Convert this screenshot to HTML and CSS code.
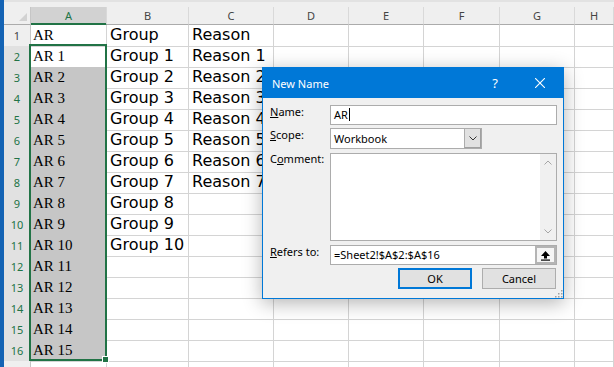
FILE: index.html
```html
<!DOCTYPE html>
<html>
<head>
<meta charset="utf-8">
<title>New Name</title>
<link rel="stylesheet" href="styles.css">
</head>
<body>

<div class="window">
	<div class="edge"></div>
	<div class="sheet">
		<div class="topbar"></div>
		<div class="row head">
			<div class="corner"></div>
			<div class="ch sel">A</div><div class="ch">B</div><div class="ch">C</div><div class="ch">D</div>
			<div class="ch">E</div><div class="ch">F</div><div class="ch">G</div><div class="ch">H</div>
		</div>
		<div class="row">
			<div class="rh">1</div><div class="c serif">AR</div><div class="c">Group</div><div class="c">Reason</div>
			<div class="c"></div><div class="c"></div><div class="c"></div><div class="c"></div><div class="c"></div>
		</div>
		<div class="row on">
			<div class="rh">2</div><div class="c serif">AR 1</div><div class="c">Group 1</div><div class="c">Reason 1</div>
			<div class="c"></div><div class="c"></div><div class="c"></div><div class="c"></div><div class="c"></div>
		</div>
		<div class="row on">
			<div class="rh">3</div><div class="c serif hl">AR 2</div><div class="c">Group 2</div><div class="c">Reason 2</div>
			<div class="c"></div><div class="c"></div><div class="c"></div><div class="c"></div><div class="c"></div>
		</div>
		<div class="row on">
			<div class="rh">4</div><div class="c serif hl">AR 3</div><div class="c">Group 3</div><div class="c">Reason 3</div>
			<div class="c"></div><div class="c"></div><div class="c"></div><div class="c"></div><div class="c"></div>
		</div>
		<div class="row on">
			<div class="rh">5</div><div class="c serif hl">AR 4</div><div class="c">Group 4</div><div class="c">Reason 4</div>
			<div class="c"></div><div class="c"></div><div class="c"></div><div class="c"></div><div class="c"></div>
		</div>
		<div class="row on">
			<div class="rh">6</div><div class="c serif hl">AR 5</div><div class="c">Group 5</div><div class="c">Reason 5</div>
			<div class="c"></div><div class="c"></div><div class="c"></div><div class="c"></div><div class="c"></div>
		</div>
		<div class="row on">
			<div class="rh">7</div><div class="c serif hl">AR 6</div><div class="c">Group 6</div><div class="c">Reason 6</div>
			<div class="c"></div><div class="c"></div><div class="c"></div><div class="c"></div><div class="c"></div>
		</div>
		<div class="row on">
			<div class="rh">8</div><div class="c serif hl">AR 7</div><div class="c">Group 7</div><div class="c">Reason 7</div>
			<div class="c"></div><div class="c"></div><div class="c"></div><div class="c"></div><div class="c"></div>
		</div>
		<div class="row on">
			<div class="rh">9</div><div class="c serif hl">AR 8</div><div class="c">Group 8</div><div class="c"></div>
			<div class="c"></div><div class="c"></div><div class="c"></div><div class="c"></div><div class="c"></div>
		</div>
		<div class="row on">
			<div class="rh">10</div><div class="c serif hl">AR 9</div><div class="c">Group 9</div><div class="c"></div>
			<div class="c"></div><div class="c"></div><div class="c"></div><div class="c"></div><div class="c"></div>
		</div>
		<div class="row on">
			<div class="rh">11</div><div class="c serif hl">AR 10</div><div class="c">Group 10</div><div class="c"></div>
			<div class="c"></div><div class="c"></div><div class="c"></div><div class="c"></div><div class="c"></div>
		</div>
		<div class="row on">
			<div class="rh">12</div><div class="c serif hl">AR 11</div><div class="c"></div><div class="c"></div>
			<div class="c"></div><div class="c"></div><div class="c"></div><div class="c"></div><div class="c"></div>
		</div>
		<div class="row on">
			<div class="rh">13</div><div class="c serif hl">AR 12</div><div class="c"></div><div class="c"></div>
			<div class="c"></div><div class="c"></div><div class="c"></div><div class="c"></div><div class="c"></div>
		</div>
		<div class="row on">
			<div class="rh">14</div><div class="c serif hl">AR 13</div><div class="c"></div><div class="c"></div>
			<div class="c"></div><div class="c"></div><div class="c"></div><div class="c"></div><div class="c"></div>
		</div>
		<div class="row on">
			<div class="rh">15</div><div class="c serif hl">AR 14</div><div class="c"></div><div class="c"></div>
			<div class="c"></div><div class="c"></div><div class="c"></div><div class="c"></div><div class="c"></div>
		</div>
		<div class="row on">
			<div class="rh">16</div><div class="c serif hl">AR 15</div><div class="c"></div><div class="c"></div>
			<div class="c"></div><div class="c"></div><div class="c"></div><div class="c"></div><div class="c"></div>
		</div>
		<div class="row">
			<div class="rh"></div><div class="c"></div><div class="c"></div><div class="c"></div>
			<div class="c"></div><div class="c"></div><div class="c"></div><div class="c"></div><div class="c"></div>
		</div>
	</div>
</div>

<!-- selection A2:A16 -->
<div class="selection"></div>
<div class="fill-handle"></div>

<div class="dlg">
	<div class="dlg-title">
		<span class="dlg-name">New Name</span>
		<span class="tbtn">?</span>
		<span class="tbtn close">
			<svg width="10" height="10" viewBox="0 0 10 10"><path d="M0 0L10 10M10 0L0 10" stroke="#fff" stroke-width="1.1" fill="none"/></svg>
		</span>
	</div>
	<div class="dlg-body">
		<div class="lbl"><u>N</u>ame:</div>
		<div class="field">AR<span class="caret"></span></div>

		<div class="lbl"><u>S</u>cope:</div>
		<div class="select">
			<span class="select-text">Workbook</span>
			<span class="dd">
				<svg width="8" height="5" viewBox="0 0 8 5"><path d="M0.5 0.5L4 4L7.5 0.5" stroke="#333" fill="none"/></svg>
			</span>
		</div>

		<div class="lbl lbl-comment">C<u>o</u>mment:</div>
		<div class="textarea">
			<div class="ta-text"></div>
			<div class="sbar">
				<svg width="8" height="5" viewBox="0 0 8 5"><path d="M0.5 4.5L4 1L7.5 4.5" stroke="#a6a6a6" fill="none"/></svg>
				<svg width="8" height="5" viewBox="0 0 8 5"><path d="M0.5 0.5L4 4L7.5 0.5" stroke="#a6a6a6" fill="none"/></svg>
			</div>
		</div>

		<div class="lbl"><u>R</u>efers to:</div>
		<div class="field refers">
			<span class="ref-text">=Sheet2!$A$2:$A$16</span>
			<span class="collapse">
				<svg width="11" height="11" viewBox="0 0 11 11"><path d="M5.5 1L1 6H4V8.5H7V6H10Z" fill="#000"/><rect x="1" y="9.5" width="9" height="1.2" fill="#000"/></svg>
			</span>
		</div>

		<div class="btns">
			<div class="btn default">OK</div>
			<div class="btn">Cancel</div>
		</div>
	</div>
	<svg class="grip" width="10" height="10" viewBox="0 0 10 10">
		<rect x="8" y="2" width="1.5" height="1.5" fill="#a0a0a0"/>
		<rect x="5" y="5" width="1.5" height="1.5" fill="#a0a0a0"/>
		<rect x="8" y="5" width="1.5" height="1.5" fill="#a0a0a0"/>
		<rect x="2" y="8" width="1.5" height="1.5" fill="#a0a0a0"/>
		<rect x="5" y="8" width="1.5" height="1.5" fill="#a0a0a0"/>
		<rect x="8" y="8" width="1.5" height="1.5" fill="#a0a0a0"/>
	</svg>
</div>

</body>
</html>
```

FILE: styles.css
```css
* {
	box-sizing: border-box;
}
html, body {
	margin: 0;
	padding: 0;
}
body {
	position: relative;
	width: 614px;
	height: 367px;
	overflow: hidden;
	background-color: #fff;
	font-family: "Noto Sans", sans-serif;
}

/* sheet */
.window {
	display: flex;
	height: 100%;
}
.edge {
	flex: none;
	width: 4px;
	background-color: #1463b4;
}
.sheet {
	flex: 1;
	min-width: 0;
}
.topbar {
	height: 7px;
	background-color: #efefef;
	border-top: 2px solid #e2e2e2;
}
.row {
	display: grid;
	grid-template-columns: 27px 76px 82px 85px 75px 75px 76px 75px 1fr;
	height: 21px;
}
.row.head {
	height: 18px;
}
.corner {
	display: flex;
	align-items: flex-end;
	justify-content: flex-end;
	padding: 0 3px 3px 0;
	background-color: #efefef;
	border-right: 1px solid #c6c6c6;
	border-bottom: 1px solid #ababab;
}
.corner::after {
	content: "";
	width: 0;
	height: 0;
	border-left: 8px solid transparent;
	border-bottom: 8px solid #d2d2d2;
}
.ch {
	background-color: #efefef;
	border-right: 1px solid #d9d9d9;
	border-bottom: 1px solid #ababab;
	color: #444;
	font-size: 11px;
	line-height: 17px;
	text-align: center;
}
.ch.sel {
	background-color: #d2d2d2;
	color: #217346;
	border-bottom-color: #217346;
	box-shadow: inset 0 -1px 0 #217346;
}
.rh {
	background-color: #efefef;
	border-right: 1px solid #c6c6c6;
	border-bottom: 1px solid #d9d9d9;
	color: #444;
	font-size: 11px;
	line-height: 21px;
	text-align: center;
}
.row.on .rh {
	background-color: #e1e1e1;
	color: #217346;
}
.c {
	padding-left: 3px;
	border-right: 1px solid #d4d4d4;
	border-bottom: 1px solid #d4d4d4;
	color: #000;
	font-family: "DejaVu Sans", sans-serif;
	font-size: 16px;
	line-height: 20px;
	white-space: nowrap;
}
.serif {
	padding-left: 2px;
	font-family: "Liberation Serif", serif;
	font-size: 15px;
}
.hl {
	background-color: #c6c6c6;
}

/* selection over column A */
.selection {
	position: absolute;
	left: 29px;
	top: 44px;
	width: 78px;
	height: 317px;
	border: 2px solid #217346;
}
.fill-handle {
	position: absolute;
	left: 102px;
	top: 356px;
	width: 7px;
	height: 7px;
	background-color: #217346;
	border: 1px solid #fff;
}

/* New Name dialog */
.dlg {
	position: absolute;
	left: 262px;
	top: 67px;
	width: 302px;
	height: 232px;
	display: flex;
	flex-direction: column;
	background-color: #f0f0f0;
	border: 1px solid #0078d7;
	box-shadow: 0 4px 18px rgba(0, 0, 0, .3);
}
.dlg-title {
	display: flex;
	align-items: center;
	height: 30px;
	padding: 0 6px 0 9px;
	background-color: #0078d7;
	color: #fff;
	font-size: 11px;
}
.dlg-name {
	flex: 1;
}
.tbtn {
	display: flex;
	align-items: center;
	justify-content: center;
	width: 34px;
	font-size: 13px;
}
.tbtn.close {
	margin-left: 11px;
}
.dlg-body {
	flex: 1;
	display: grid;
	grid-template-columns: 60px 1fr;
	grid-template-rows: 20px 22px 89px 20px 21px;
	row-gap: 3px;
	align-items: start;
	padding: 7px 6px 0 7px;
	color: #000;
	font-size: 11px;
}
.lbl {
	line-height: 14px;
}
.lbl-comment {
	margin-top: -1px;
}
.field {
	height: 20px;
	padding-left: 3px;
	background-color: #fff;
	border: 1px solid #acacac;
	line-height: 18px;
	white-space: nowrap;
}
.caret {
	display: inline-block;
	width: 1px;
	height: 13px;
	margin-left: 1px;
	vertical-align: -2px;
	background-color: #000;
}
.select {
	display: flex;
	width: 152px;
	height: 21px;
	background-color: #fff;
	border: 1px solid #acacac;
	line-height: 19px;
}
.select-text {
	flex: 1;
	padding-left: 3px;
}
.dd {
	display: flex;
	align-items: center;
	justify-content: center;
	width: 17px;
	background-color: #e1e1e1;
	border-left: 1px solid #acacac;
	border-right: 1px solid #a0a0a0;
	border-bottom: 1px solid #a0a0a0;
}
.textarea {
	display: flex;
	height: 88px;
	background-color: #fff;
	border: 1px solid #acacac;
}
.ta-text {
	flex: 1;
}
.sbar {
	display: flex;
	flex-direction: column;
	justify-content: space-between;
	align-items: center;
	width: 16px;
	padding: 6px 0 6px;
	background-color: #f0f0f0;
}
.refers {
	display: flex;
	padding-right: 0;
}
.ref-text {
	flex: 1;
}
.collapse {
	display: flex;
	align-items: center;
	justify-content: center;
	width: 21px;
	height: 18px;
	background-color: #f5f5f5;
	border: 2px solid #b4b4b4;
}
.btns {
	grid-column: 1 / -1;
	display: flex;
	justify-content: flex-end;
	gap: 10px;
	padding-right: 1px;
}
.btn {
	width: 74px;
	height: 21px;
	background-color: #e1e1e1;
	border: 1px solid #adadad;
	line-height: 19px;
	text-align: center;
}
.btn.default {
	border: 2px solid #0078d7;
	line-height: 17px;
}
.grip {
	position: absolute;
	right: 0;
	bottom: 0;
}
```
